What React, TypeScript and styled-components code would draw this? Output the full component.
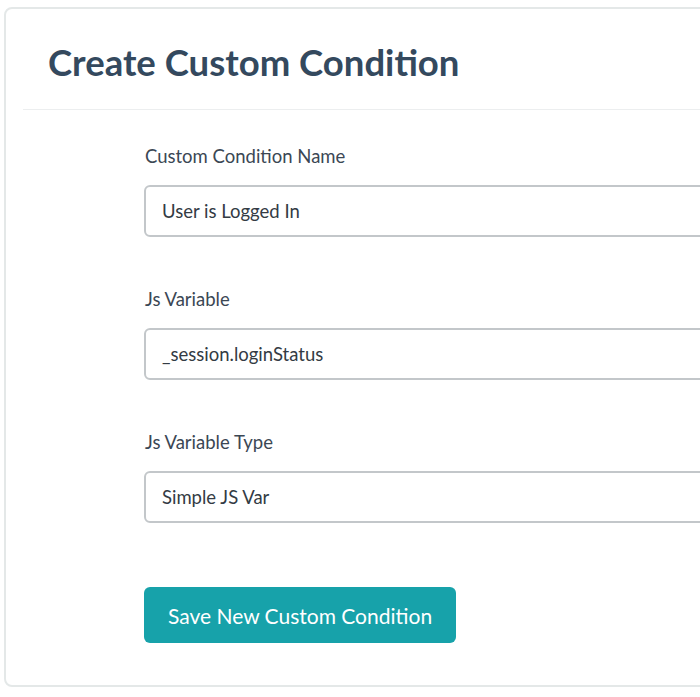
import React from "react";
import styled, { createGlobalStyle } from "styled-components";

const GlobalStyle = createGlobalStyle`
    html, body {
        margin: 0;
        padding: 0;
        background: #ffffff;
        overflow: hidden;
    }
    body {
        font-family: Lato, "Open Sans", sans-serif;
    }
`;

const Card = styled.div`
    margin: 7px 0 0 4px;
    width: 760px;
    border: 2px solid #e4e8e8;
    border-radius: 8px;
    background: #ffffff;
    box-sizing: border-box;
`;

const CardHeader = styled.div`
    margin-left: 17px;
    padding: 32px 0 24px 25px;
    border-bottom: 1px solid #eceeef;
`;

const Title = styled.h1`
    margin: 0;
    font-size: 36.5px;
    line-height: 1.2;
    font-weight: 700;
    color: #34495e;
`;

const CardBody = styled.form`
    display: flex;
    flex-direction: column;
    padding: 35px 0 42px 138px;
`;

const Field = styled.div`
    display: flex;
    flex-direction: column;
    gap: 18px;
    margin-bottom: 51px;
`;

const Label = styled.label`
    font-size: 18.5px;
    line-height: 1.2;
    color: #3b4754;
    padding-left: 1px;
`;

const Input = styled.input`
    height: 52px;
    box-sizing: border-box;
    width: 640px;
    border: 2px solid #c3c7ca;
    border-radius: 6px;
    padding: 0 16px;
    font-family: Lato, "Open Sans", sans-serif;
    font-size: 18.5px;
    color: #333b44;
    background: #ffffff;
    outline: none;
`;

const Button = styled.button`
    align-self: flex-start;
    margin-top: 13px;
    height: 56px;
    padding: 0 24px;
    border: none;
    border-radius: 6px;
    background: #17a2aa;
    color: #ffffff;
    font-family: Lato, "Open Sans", sans-serif;
    font-size: 21px;
    cursor: pointer;
`;

const fields = [
    { label: "Custom Condition Name", value: "User is Logged In" },
    { label: "Js Variable", value: "_session.loginStatus" },
    { label: "Js Variable Type", value: "Simple JS Var" },
];

export default function App() {
    return (
        <>
            <GlobalStyle />
            <Card>
                <CardHeader>
                    <Title>Create Custom Condition</Title>
                </CardHeader>
                <CardBody onSubmit={(e) => e.preventDefault()}>
                    {fields.map((f) => (
                        <Field key={f.label}>
                            <Label>{f.label}</Label>
                            <Input defaultValue={f.value} />
                        </Field>
                    ))}
                    <Button type="submit">Save New Custom Condition</Button>
                </CardBody>
            </Card>
        </>
    );
}
